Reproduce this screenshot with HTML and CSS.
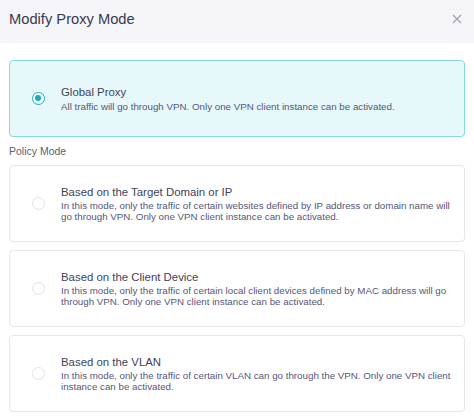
FILE: index.html
```html
<!DOCTYPE html>
<html>
<head>
<meta charset="utf-8">
<link rel="stylesheet" href="styles.css">
</head>
<body>
<div class="dialog">
  <div class="header">
    <div class="title">Modify Proxy Mode</div>
    <svg class="close" width="10" height="10" viewBox="0 0 10 10"><path d="M1 1L9 9M9 1L1 9" stroke="#a0a0a8" stroke-width="1.1" fill="none"/></svg>
  </div>
  <div class="body">
    <div class="card selected">
      <span class="radio on"></span>
      <div class="text">
        <div class="ctitle">Global Proxy</div>
        <div class="desc">All traffic will go through VPN. Only one VPN client instance can be activated.</div>
      </div>
    </div>
    <div class="label">Policy Mode</div>
    <div class="list">
      <div class="card">
        <span class="radio"></span>
        <div class="text">
          <div class="ctitle">Based on the Target Domain or IP</div>
          <div class="desc">In this mode, only the traffic of certain websites defined by IP address or domain name will go through VPN. Only one VPN client instance can be activated.</div>
        </div>
      </div>
      <div class="card">
        <span class="radio"></span>
        <div class="text">
          <div class="ctitle">Based on the Client Device</div>
          <div class="desc">In this mode, only the traffic of certain local client devices defined by MAC address will go through VPN. Only one VPN client instance can be activated.</div>
        </div>
      </div>
      <div class="card">
        <span class="radio"></span>
        <div class="text">
          <div class="ctitle">Based on the VLAN</div>
          <div class="desc">In this mode, only the traffic of certain VLAN can go through the VPN. Only one VPN client instance can be activated.</div>
        </div>
      </div>
    </div>
  </div>
</div>
</body>
</html>
```
FILE: styles.css
```css
* { box-sizing: border-box; }
html, body { margin: 0; padding: 0; background: #fff; }
body { font-family: "Liberation Sans", Arial, sans-serif; width: 474px; height: 420px; overflow: hidden; }
.header {
  height: 43px;
  background: #f4f4f9;
  display: flex;
  align-items: center;
  justify-content: space-between;
  padding: 0 12px 6px 9px;
}
.title { font-size: 14.7px; color: #3a3a4e; }
.close { display: block; }
.body { padding: 17px 9px 0 9px; }
.card {
  height: 77px;
  border: 1px solid #e6e6ec;
  border-radius: 4px;
  display: flex;
  align-items: center;
  padding: 0 0 0 22px;
  background: #fff;
}
.card.selected { background: #e7f8fb; border-color: #86dadb; }
.radio {
  width: 13px; height: 13px;
  border-radius: 50%;
  border: 1px solid #e2e2e8;
  background: #fff;
  flex: none;
  margin-right: 16px;
  position: relative;
}
.radio.on { border: 1.5px solid #1aaac4; background: #fff; }
.radio.on::after {
  content: "";
  position: absolute;
  left: 2px; top: 2px;
  width: 6px; height: 6px;
  border-radius: 50%;
  background: #1aaac4;
}
.text { padding-right: 10px; }
.ctitle { font-size: 11.4px; color: #424258; line-height: 15px; margin-bottom: 0; }
.desc { font-size: 9.75px; color: #56567a; line-height: 11.5px; }
.selected .ctitle { margin-bottom: 1px; }
.label { font-size: 10.5px; color: #5e5e6c; padding: 8px 0 8px 0; line-height: 12px; }
.list { display: flex; flex-direction: column; gap: 8px; }
```
